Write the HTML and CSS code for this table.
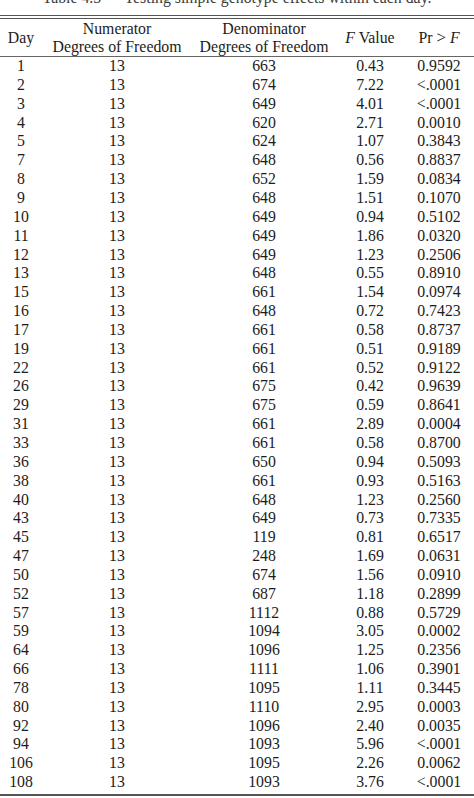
FILE: index.html
```html
<!DOCTYPE html>
<html lang="en">
<head>
<meta charset="utf-8">
<title>Testing simple genotype effects within each day</title>
<link rel="stylesheet" href="styles.css">
</head>
<body>
<div class="page">
  <p class="caption">Table 4.5 &mdash; Testing simple genotype effects within each day.</p>
  <div class="toprule"></div>
  <table class="stats">
    <colgroup>
      <col class="c-day">
      <col class="c-num">
      <col class="c-den">
      <col class="c-f">
      <col class="c-p">
    </colgroup>
    <thead>
      <tr>
        <th>Day</th>
        <th>Numerator<br>Degrees of Freedom</th>
        <th>Denominator<br>Degrees of Freedom</th>
        <th><i>F</i> Value</th>
        <th>Pr <span class="rel">&gt;</span> <i>F</i></th>
      </tr>
    </thead>
    <tbody>
      <tr><td>1</td><td>13</td><td>663</td><td>0.43</td><td>0.9592</td></tr>
      <tr><td>2</td><td>13</td><td>674</td><td>7.22</td><td>&lt;.0001</td></tr>
      <tr><td>3</td><td>13</td><td>649</td><td>4.01</td><td>&lt;.0001</td></tr>
      <tr><td>4</td><td>13</td><td>620</td><td>2.71</td><td>0.0010</td></tr>
      <tr><td>5</td><td>13</td><td>624</td><td>1.07</td><td>0.3843</td></tr>
      <tr><td>7</td><td>13</td><td>648</td><td>0.56</td><td>0.8837</td></tr>
      <tr><td>8</td><td>13</td><td>652</td><td>1.59</td><td>0.0834</td></tr>
      <tr><td>9</td><td>13</td><td>648</td><td>1.51</td><td>0.1070</td></tr>
      <tr><td>10</td><td>13</td><td>649</td><td>0.94</td><td>0.5102</td></tr>
      <tr><td>11</td><td>13</td><td>649</td><td>1.86</td><td>0.0320</td></tr>
      <tr><td>12</td><td>13</td><td>649</td><td>1.23</td><td>0.2506</td></tr>
      <tr><td>13</td><td>13</td><td>648</td><td>0.55</td><td>0.8910</td></tr>
      <tr><td>15</td><td>13</td><td>661</td><td>1.54</td><td>0.0974</td></tr>
      <tr><td>16</td><td>13</td><td>648</td><td>0.72</td><td>0.7423</td></tr>
      <tr><td>17</td><td>13</td><td>661</td><td>0.58</td><td>0.8737</td></tr>
      <tr><td>19</td><td>13</td><td>661</td><td>0.51</td><td>0.9189</td></tr>
      <tr><td>22</td><td>13</td><td>661</td><td>0.52</td><td>0.9122</td></tr>
      <tr><td>26</td><td>13</td><td>675</td><td>0.42</td><td>0.9639</td></tr>
      <tr><td>29</td><td>13</td><td>675</td><td>0.59</td><td>0.8641</td></tr>
      <tr><td>31</td><td>13</td><td>661</td><td>2.89</td><td>0.0004</td></tr>
      <tr><td>33</td><td>13</td><td>661</td><td>0.58</td><td>0.8700</td></tr>
      <tr><td>36</td><td>13</td><td>650</td><td>0.94</td><td>0.5093</td></tr>
      <tr><td>38</td><td>13</td><td>661</td><td>0.93</td><td>0.5163</td></tr>
      <tr><td>40</td><td>13</td><td>648</td><td>1.23</td><td>0.2560</td></tr>
      <tr><td>43</td><td>13</td><td>649</td><td>0.73</td><td>0.7335</td></tr>
      <tr><td>45</td><td>13</td><td>119</td><td>0.81</td><td>0.6517</td></tr>
      <tr><td>47</td><td>13</td><td>248</td><td>1.69</td><td>0.0631</td></tr>
      <tr><td>50</td><td>13</td><td>674</td><td>1.56</td><td>0.0910</td></tr>
      <tr><td>52</td><td>13</td><td>687</td><td>1.18</td><td>0.2899</td></tr>
      <tr><td>57</td><td>13</td><td>1112</td><td>0.88</td><td>0.5729</td></tr>
      <tr><td>59</td><td>13</td><td>1094</td><td>3.05</td><td>0.0002</td></tr>
      <tr><td>64</td><td>13</td><td>1096</td><td>1.25</td><td>0.2356</td></tr>
      <tr><td>66</td><td>13</td><td>1111</td><td>1.06</td><td>0.3901</td></tr>
      <tr><td>78</td><td>13</td><td>1095</td><td>1.11</td><td>0.3445</td></tr>
      <tr><td>80</td><td>13</td><td>1110</td><td>2.95</td><td>0.0003</td></tr>
      <tr><td>92</td><td>13</td><td>1096</td><td>2.40</td><td>0.0035</td></tr>
      <tr><td>94</td><td>13</td><td>1093</td><td>5.96</td><td>&lt;.0001</td></tr>
      <tr><td>106</td><td>13</td><td>1095</td><td>2.26</td><td>0.0062</td></tr>
      <tr><td>108</td><td>13</td><td>1093</td><td>3.76</td><td>&lt;.0001</td></tr>
    </tbody>
  </table>
</div>
</body>
</html>
```

FILE: styles.css
```css
html, body {
  margin: 0;
  padding: 0;
  background: #ffffff;
}

body {
  font-family: "Liberation Serif", "Times New Roman", serif;
  font-size: 15.8px;
  color: #1c1c1c;
  overflow: hidden;
}

.page {
  width: 474px;
  height: 798px;
  overflow: hidden;
}

.caption {
  margin: -11px 0 0 0;
  line-height: 18px;
  text-align: center;
  white-space: nowrap;
  color: #3a3a3a;
}

.toprule {
  margin-top: 8px;
  height: 1.5px;
  border-top: 1.5px solid #555555;
  border-bottom: 1.5px solid #555555;
}

.stats {
  width: 474px;
  border-collapse: collapse;
  table-layout: fixed;
}

.c-day { width: 42px; }
.c-num { width: 150px; }
.c-den { width: 144px; }
.c-f   { width: 68px; }
.c-p   { width: 70px; }

.stats th {
  font-weight: normal;
  text-align: center;
  vertical-align: middle;
  line-height: 18px;
  padding: 1.6px 0 0 0;
  white-space: nowrap;
  border-bottom: 1px solid #666666;
}

.rel {
  font-size: 17px;
}

.stats td {
  text-align: center;
  line-height: 18.84px;
  height: 18.84px;
  padding: 0;
  white-space: nowrap;
}

.stats tbody tr:last-child td {
  padding-bottom: 2px;
  border-bottom: 2px solid #555555;
}
```
